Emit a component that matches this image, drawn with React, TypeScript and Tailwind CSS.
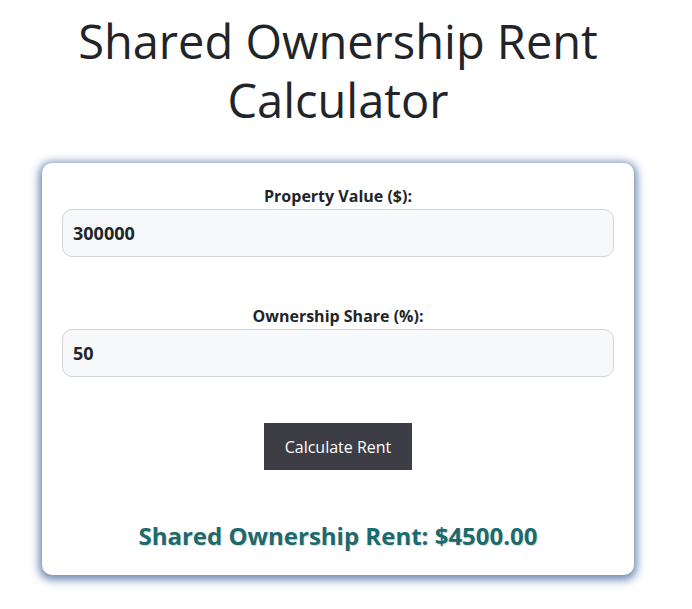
import React, { FC, useState } from "react";

const App: FC = () => {
  const [propertyValue, setPropertyValue] = useState("300000");
  const [share, setShare] = useState("50");
  const [rent, setRent] = useState("4500.00");

  const calculate = () => {
    const value = parseFloat(propertyValue) || 0;
    const pct = parseFloat(share) || 0;
    // 3% annual rent on the unowned part
    setRent(((value * (100 - pct)) / 100 * 0.03).toFixed(2));
  };

  return (
    <div
      className="min-h-screen bg-white text-[#212529] pt-[12px]"
      style={{ fontFamily: '"Open Sans", "Noto Sans", sans-serif' }}
    >
      <div className="w-[676px]">
        <h1 className="text-center text-[47px] leading-[59px] font-normal mx-auto w-[580px]">
          Shared Ownership Rent Calculator
        </h1>
        <div className="mx-auto mt-[33px] w-[592px] bg-white rounded-[10px] shadow-[0_2px_9px_3px_rgba(50,90,150,0.7)] px-5 pt-[22px] pb-[23px]">
          <Field label="Property Value ($):" value={propertyValue} onChange={setPropertyValue} />
          <div className="h-[48px]" />
          <Field label="Ownership Share (%):" value={share} onChange={setShare} />
          <div className="flex justify-center mt-[46px]">
            <button
              onClick={calculate}
              className="bg-[#3d3e45] text-white text-[16px] w-[148px] h-[47px]"
            >
              Calculate Rent
            </button>
          </div>
          <p className="text-center mt-[50px] text-[24px] leading-[32px] font-bold text-[#1b6a6d] [text-shadow:1px_1px_1px_rgba(0,0,0,0.15)]">
            Shared Ownership Rent: ${rent}
          </p>
        </div>
      </div>
    </div>
  );
};

const Field: FC<{ label: string; value: string; onChange: (v: string) => void }> = ({
  label,
  value,
  onChange,
}) => {
  return (
    <div className="flex flex-col">
      <label className="text-center text-[16px] font-bold leading-[22px] mb-[2px]">{label}</label>
      <input
        type="text"
        value={value}
        onChange={(e) => onChange(e.target.value)}
        className="h-[48px] w-full rounded-[10px] border border-[#d3d5d8] bg-[#f7f8fa] px-[10px] text-[18px] font-bold text-[#212529] outline-none"
      />
    </div>
  );
};

export default App;
